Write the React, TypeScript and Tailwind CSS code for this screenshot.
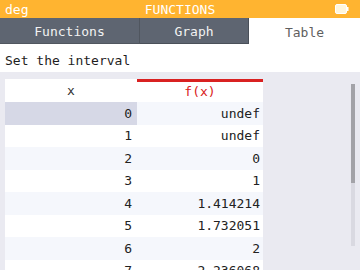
const rows = [
  { x: "0", fx: "undef" },
  { x: "1", fx: "undef" },
  { x: "2", fx: "0" },
  { x: "3", fx: "1" },
  { x: "4", fx: "1.414214" },
  { x: "5", fx: "1.732051" },
  { x: "6", fx: "2" },
  { x: "7", fx: "2.236068" },
];

const mono = { fontFamily: '"DejaVu Sans Mono", monospace' };

function Battery() {
  return (
    <svg width="14" height="10" viewBox="0 0 14 10">
      <rect x="0.5" y="0.5" width="11" height="9" rx="1.5" fill="#fff6dc" stroke="#ffffff" />
      <rect x="12" y="3" width="1.5" height="4" fill="#ffffff" />
    </svg>
  );
}

export default function App() {
  return (
    <div
      className="w-[360px] h-[270px] overflow-hidden flex flex-col bg-[#eaeaf1] text-[13px] leading-none"
      style={mono}
    >
      {/* Status bar */}
      <div className="h-[18px] shrink-0 bg-[#ffb430] flex items-center justify-between px-[5px] text-white">
        <span className="w-[60px]">deg</span>
        <span>FUNCTIONS</span>
        <span className="w-[60px] flex justify-end pr-[6px]">
          <Battery />
        </span>
      </div>

      {/* Tabs */}
      <div className="h-[26px] shrink-0 flex">
        <div className="w-[140px] bg-[#5e6571] border-b border-r border-[#50565f] text-[#f2f2f2] flex items-center justify-center pt-[2px]">
          Functions
        </div>
        <div className="w-[109px] bg-[#5e6571] border-b border-r border-[#4a5059] text-[#f2f2f2] flex items-center justify-center pt-[2px]">
          Graph
        </div>
        <div className="flex-1 bg-white text-[#5f5f5f] flex items-center justify-center pt-[2px]">
          Table
        </div>
      </div>

      {/* Prompt */}
      <div className="h-[28px] shrink-0 bg-white flex items-center px-[5px] pt-[4px] text-[#1e1e1e]">
        Set the interval
      </div>

      {/* Table area */}
      <div className="flex-1 flex justify-between pl-[5px] pr-[5px] pt-[7px]">
        <div className="w-[258px] flex flex-col">
          <div className="h-[23px] shrink-0 flex">
            <div className="w-[132px] bg-white flex items-center justify-center text-[#333]">x</div>
            <div className="flex-1 bg-white border-t-[3px] border-[#d92121] flex items-center justify-center text-[#d92121] pb-[2px]">
              f(x)
            </div>
          </div>
          {rows.map((r, i) => (
            <div
              key={r.x}
              className={`h-[22.5px] shrink-0 flex ${i % 2 === 0 ? "bg-[#f5f7fc]" : "bg-white"}`}
            >
              <div
                className={`w-[132px] flex items-center justify-end pr-[5px] text-[#222] ${
                  i === 0 ? "bg-[#d6d8e6]" : ""
                }`}
              >
                {r.x}
              </div>
              <div className="flex-1 flex items-center justify-end pr-[3px] text-[#222]">{r.fx}</div>
            </div>
          ))}
        </div>

        {/* Scrollbar */}
        <div className="w-[4px] h-[162px] mt-[5px] bg-[#d9d9e1] flex flex-col">
          <div className="h-[99px] bg-[#a3a3a8]" />
        </div>
      </div>
    </div>
  );
}
